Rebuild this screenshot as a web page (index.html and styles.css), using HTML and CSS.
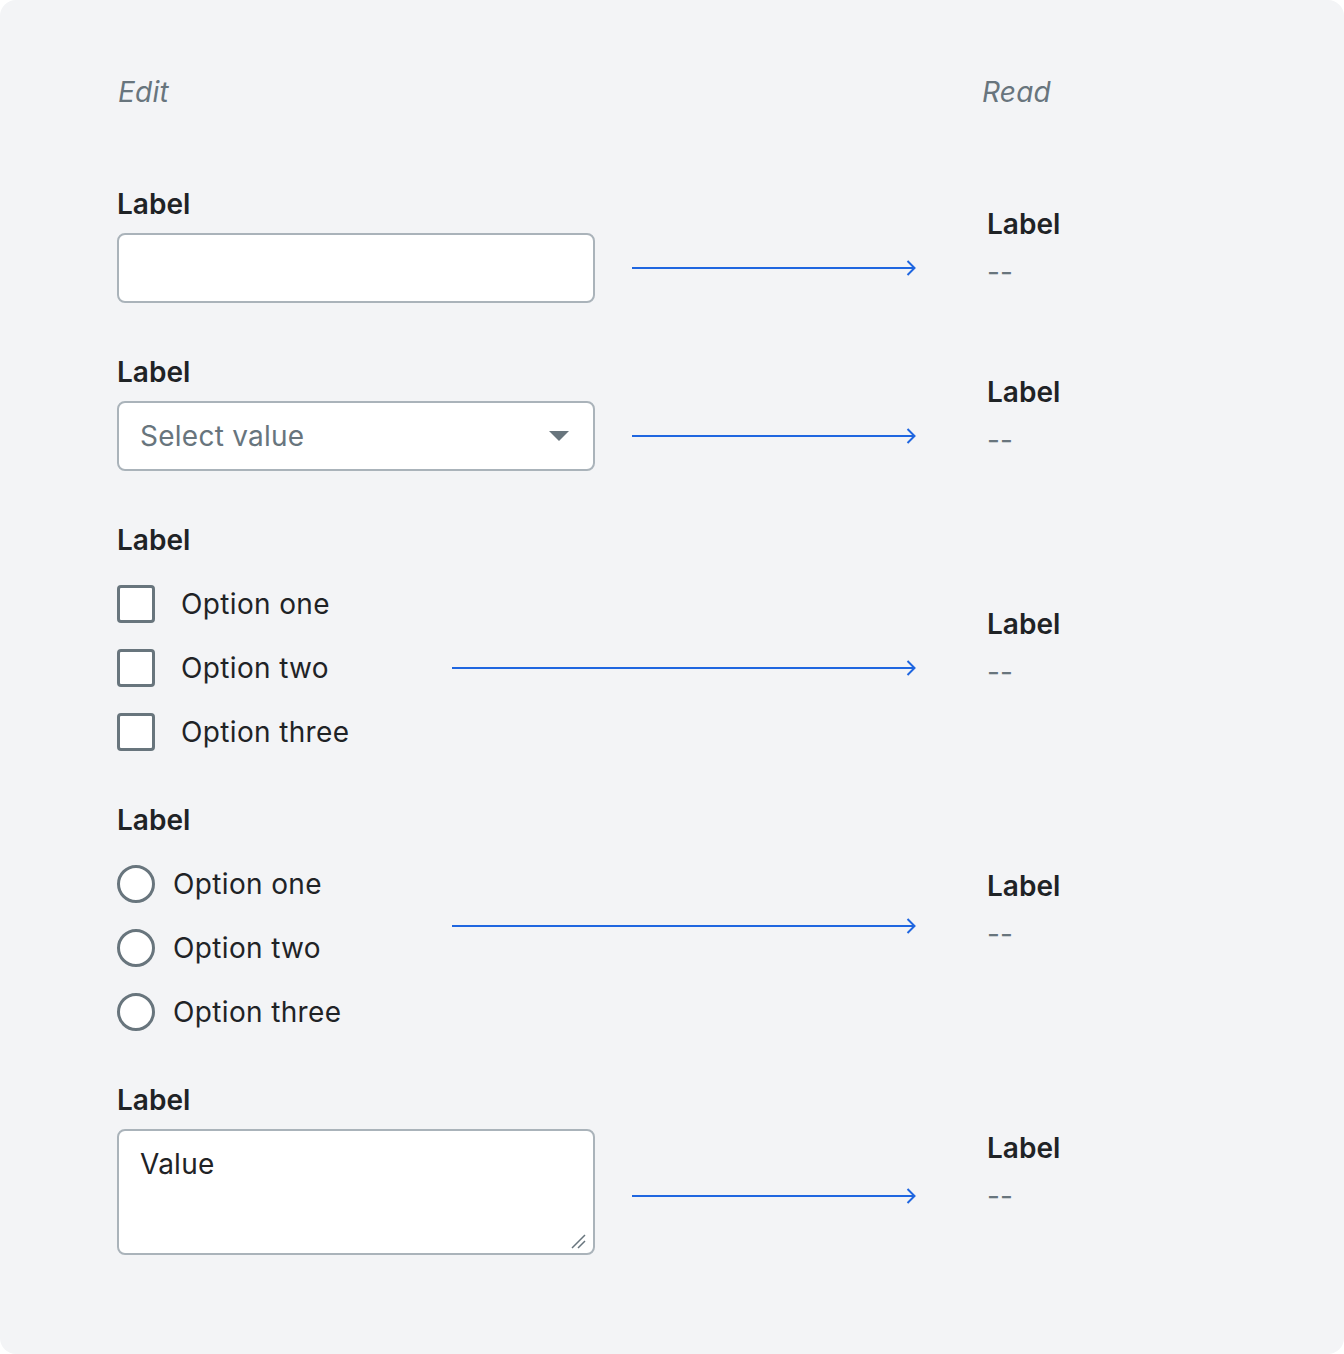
FILE: index.html
```html
<!DOCTYPE html>
<html lang="en">
<head>
  <meta charset="UTF-8">
  <meta name="viewport" content="width=device-width, initial-scale=1.0">
  <title>Edit / Read fields</title>
  <link rel="stylesheet" href="styles.css">
</head>
<body>
  <main class="card">
    <div class="field field--head">
      <div class="head">Edit</div>
      <div class="head head--read">Read</div>
    </div>

    <div class="field">
      <label class="label" for="text-1">Label</label>
      <input class="input" id="text-1" type="text">
      <span class="arrow"><span class="arrow-line"></span><svg width="10" height="16" viewBox="0 0 10 16"><path d="M1.5 1 L8.5 8 L1.5 15" fill="none" stroke="currentColor" stroke-width="2"/></svg></span>
      <div class="read"><div class="read-label">Label</div><div class="read-value">--</div></div>
    </div>

    <div class="field">
      <div class="label">Label</div>
      <div class="input select">
        <span class="placeholder">Select value</span>
        <svg width="20" height="10" viewBox="0 0 20 10"><path d="M0 0 H20 L10 10 Z" fill="#68757d"/></svg>
      </div>
      <span class="arrow"><span class="arrow-line"></span><svg width="10" height="16" viewBox="0 0 10 16"><path d="M1.5 1 L8.5 8 L1.5 15" fill="none" stroke="currentColor" stroke-width="2"/></svg></span>
      <div class="read"><div class="read-label">Label</div><div class="read-value">--</div></div>
    </div>

    <div class="field field--group">
      <div class="label">Label</div>
      <div class="options">
        <label class="option"><input type="checkbox" class="check">Option one</label>
        <label class="option"><input type="checkbox" class="check">Option two</label>
        <label class="option"><input type="checkbox" class="check">Option three</label>
      </div>
      <span class="arrow"><span class="arrow-line"></span><svg width="10" height="16" viewBox="0 0 10 16"><path d="M1.5 1 L8.5 8 L1.5 15" fill="none" stroke="currentColor" stroke-width="2"/></svg></span>
      <div class="read"><div class="read-label">Label</div><div class="read-value">--</div></div>
    </div>

    <div class="field field--group field--radio">
      <div class="label">Label</div>
      <div class="options">
        <label class="option option--radio"><input type="radio" name="r" class="radio">Option one</label>
        <label class="option option--radio"><input type="radio" name="r" class="radio">Option two</label>
        <label class="option option--radio"><input type="radio" name="r" class="radio">Option three</label>
      </div>
      <span class="arrow"><span class="arrow-line"></span><svg width="10" height="16" viewBox="0 0 10 16"><path d="M1.5 1 L8.5 8 L1.5 15" fill="none" stroke="currentColor" stroke-width="2"/></svg></span>
      <div class="read"><div class="read-label">Label</div><div class="read-value">--</div></div>
    </div>

    <div class="field field--last">
      <label class="label" for="area-1">Label</label>
      <div class="area-wrap">
        <textarea class="input area" id="area-1">Value</textarea>
        <svg class="grip" width="16" height="16" viewBox="0 0 16 16"><path d="M2 15 L15 2 M8 15 L15 8" stroke="#68757d" stroke-width="1.5"/></svg>
      </div>
      <span class="arrow"><span class="arrow-line"></span><svg width="10" height="16" viewBox="0 0 10 16"><path d="M1.5 1 L8.5 8 L1.5 15" fill="none" stroke="currentColor" stroke-width="2"/></svg></span>
      <div class="read"><div class="read-label">Label</div><div class="read-value">--</div></div>
    </div>
  </main>
</body>
</html>
```

FILE: styles.css
```css
* {
  box-sizing: border-box;
}

:root {
  --card-bg: #f3f4f6;
  --text: #1f2326;
  --muted: #68757d;
  --border: #aab3ba;
  --link: #1f66e0;
}

html, body {
  margin: 0;
  background: #ffffff;
  font-family: Inter, "Noto Sans", sans-serif;
  font-size: 28px;
  line-height: 36px;
  color: var(--text);
}

.card {
  width: 1344px;
  min-height: 1354px;
  background: var(--card-bg);
  border-radius: 16px;
  padding: 74px 117px 99px;
}

.field {
  display: grid;
  grid-template-columns: 478px 1fr 240px;
  grid-template-rows: auto auto;
  margin-bottom: 51px;
}

.field--group {
  grid-template-columns: 298px 1fr 240px;
}

.field--head {
  grid-template-rows: auto;
  margin-bottom: 76px;
}

.field--last {
  margin-bottom: 0;
}

.head {
  font-style: italic;
  color: var(--muted);
  padding-left: 1px;
  letter-spacing: 0.2px;
}

.head--read {
  grid-column: 3;
  padding-left: 0;
  margin-left: -5px;
}

.label {
  grid-column: 1;
  grid-row: 1;
  font-weight: 600;
  margin-bottom: 11px;
}

.field--group .label {
  margin-bottom: 27px;
}

.input {
  grid-column: 1;
  grid-row: 2;
  width: 478px;
  height: 70px;
  margin: 0;
  background: #ffffff;
  border: 2px solid var(--border);
  border-radius: 8px;
  font: inherit;
  letter-spacing: 0.25px;
  color: var(--text);
  padding: 0 22px 0 21px;
}

.select {
  display: flex;
  align-items: center;
  justify-content: space-between;
  padding-right: 24px;
}

.placeholder {
  color: var(--muted);
}

.area-wrap {
  grid-column: 1;
  grid-row: 2;
  position: relative;
  height: 126px;
}

.area {
  height: 126px;
  resize: none;
  padding: 15px 22px 15px 21px;
  display: block;
}

.grip {
  position: absolute;
  right: 9px;
  bottom: 6px;
}

.options {
  grid-column: 1;
  grid-row: 2;
  display: flex;
  flex-direction: column;
  gap: 26px;
}

.option {
  display: flex;
  align-items: center;
  gap: 26px;
  height: 38px;
  letter-spacing: 0.35px;
}

.option--radio {
  gap: 18px;
}

.check,
.radio {
  appearance: none;
  -webkit-appearance: none;
  margin: 0;
  width: 38px;
  height: 38px;
  flex: none;
  background: #ffffff;
  border: 3px solid var(--muted);
  border-radius: 4px;
}

.radio {
  border-radius: 50%;
}

.arrow {
  grid-column: 2;
  grid-row: 2;
  align-self: center;
  display: flex;
  align-items: center;
  height: 16px;
  margin: 0 71px 0 37px;
  color: var(--link);
}

.arrow-line {
  flex: 1;
  height: 2px;
  background: var(--link);
  margin-right: -9px;
}

.arrow svg {
  display: block;
}

.read {
  grid-column: 3;
  grid-row: 2;
  align-self: center;
  margin-top: -40px;
  display: flex;
  flex-direction: column;
  gap: 12px;
}

.field--radio .arrow {
  margin-bottom: 44px;
}

.field--radio .read {
  margin-bottom: 36px;
}

.field--last .arrow {
  margin-top: 8px;
}

.read-label {
  font-weight: 600;
}

.read-value {
  color: var(--muted);
}
```
